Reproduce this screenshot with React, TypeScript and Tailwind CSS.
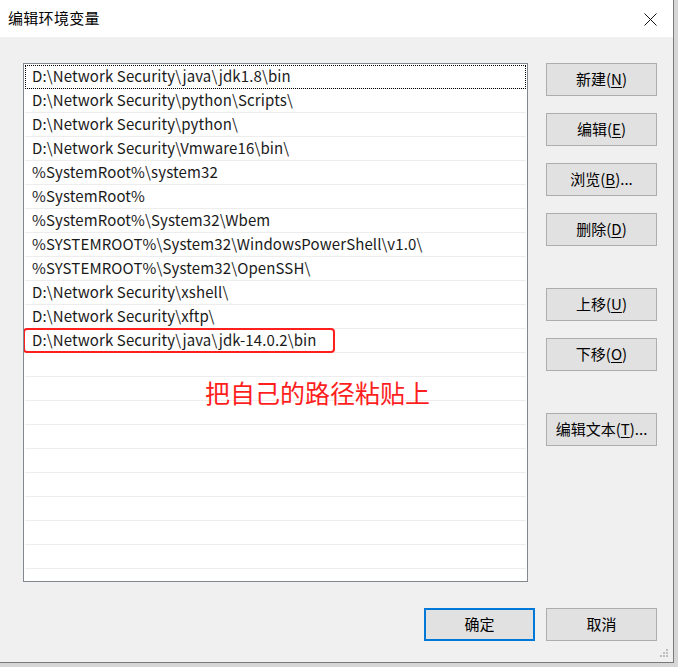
import React from "react";

const paths = [
  "D:\\Network Security\\java\\jdk1.8\\bin",
  "D:\\Network Security\\python\\Scripts\\",
  "D:\\Network Security\\python\\",
  "D:\\Network Security\\Vmware16\\bin\\",
  "%SystemRoot%\\system32",
  "%SystemRoot%",
  "%SystemRoot%\\System32\\Wbem",
  "%SYSTEMROOT%\\System32\\WindowsPowerShell\\v1.0\\",
  "%SYSTEMROOT%\\System32\\OpenSSH\\",
  "D:\\Network Security\\xshell\\",
  "D:\\Network Security\\xftp\\",
  "D:\\Network Security\\java\\jdk-14.0.2\\bin",
];

const font = { fontFamily: '"Noto Sans CJK SC", "Noto Sans", sans-serif' };

function WinButton({
  label,
  hotkey,
  suffix = "",
  primary,
  className = "",
}: {
  label: string;
  hotkey?: string;
  suffix?: string;
  primary?: boolean;
  className?: string;
}) {
  return (
    <div
      className={`flex items-center justify-center w-[111px] h-[33px] bg-[#e1e1e1] text-[15px] text-black ${
        primary ? "border-2 border-[#0078d7]" : "border border-[#adadad]"
      } ${className}`}
    >
      {label}
      {hotkey && (
        <>
          (<span className="underline underline-offset-2">{hotkey}</span>)
        </>
      )}
      {suffix}
    </div>
  );
}

export default function App() {
  const rows = Array.from({ length: 22 }, (_, i) => paths[i] ?? "");

  return (
    <div className="w-[678px] h-[667px] bg-[#d6d6d6] overflow-hidden" style={font}>
      <div className="w-[674px] h-[663px] bg-[#f0f0f0] border-r border-b border-[#7a7a7a] flex flex-col relative">
        {/* title bar */}
        <div className="h-[37px] bg-white flex items-center justify-between pl-[8px] pr-[16px] shrink-0">
          <span className="text-[15px] tracking-[0.3px] text-black">编辑环境变量</span>
          <svg width="13" height="13" viewBox="0 0 13 13" className="text-[#111] mt-[1px]">
            <path d="M0.5 0.5 L12.5 12.5 M12.5 0.5 L0.5 12.5" stroke="currentColor" strokeWidth="1" />
          </svg>
        </div>

        <div className="flex pl-[23px] pt-[26px]">
          {/* list */}
          <div className="w-[505px] h-[519px] bg-white border border-[#828790] p-[1px] overflow-hidden relative">
            {rows.map((p, i) => (
              <div
                key={i}
                className={`relative h-[24px] border-b border-[#ededed] pl-[7px] flex items-center text-[15px] tracking-[0.12px] text-[#1a1a1a] whitespace-nowrap ${
                  i === 0 ? "outline outline-1 outline-dotted outline-black -outline-offset-1" : ""
                }`}
              >
                {p}
                {i === 11 && (
                  <div className="absolute left-[-2px] top-[-1px] w-[312px] h-[25px] border-2 border-[#ff1f1f] rounded-[4px]" />
                )}
              </div>
            ))}
            <div className="absolute left-[181px] top-[312px] text-[25px] leading-[32px] text-[#ff1e1e] whitespace-nowrap">
              把自己的路径粘贴上
            </div>
          </div>

          {/* right buttons */}
          <div className="flex flex-col ml-[18px]">
            <WinButton label="新建" hotkey="N" />
            <WinButton label="编辑" hotkey="E" className="mt-[17px]" />
            <WinButton label="浏览" hotkey="B" suffix="..." className="mt-[17px]" />
            <WinButton label="删除" hotkey="D" className="mt-[17px]" />
            <WinButton label="上移" hotkey="U" className="mt-[42px]" />
            <WinButton label="下移" hotkey="O" className="mt-[17px]" />
            <WinButton label="编辑文本" hotkey="T" suffix="..." className="mt-[42px]" />
          </div>
        </div>

        {/* bottom buttons */}
        <div className="flex justify-end gap-[11px] pr-[16px] mt-[26px]">
          <WinButton label="确定" primary />
          <WinButton label="取消" />
        </div>

        {/* size grip */}
        <svg width="9" height="9" viewBox="0 0 9 9" className="absolute right-[4px] bottom-[4px]">
          <g fill="#bdbdbd">
            <rect x="6" y="0" width="2" height="2" />
            <rect x="3" y="3" width="2" height="2" />
            <rect x="6" y="3" width="2" height="2" />
            <rect x="0" y="6" width="2" height="2" />
            <rect x="3" y="6" width="2" height="2" />
            <rect x="6" y="6" width="2" height="2" />
          </g>
        </svg>
      </div>
    </div>
  );
}
